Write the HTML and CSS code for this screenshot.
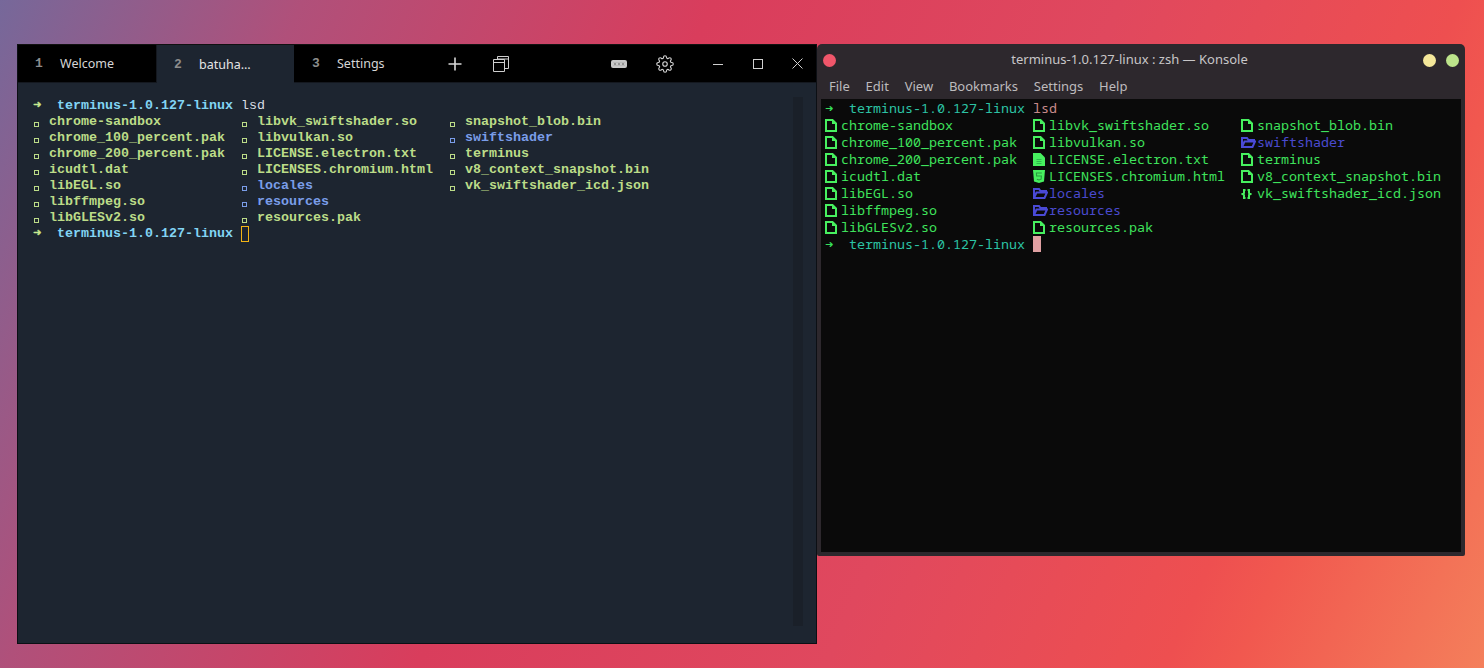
FILE: index.html
```html
<!DOCTYPE html>
<html lang="en">
<head>
    <meta charset="UTF-8">
    <meta name="viewport" content="width=device-width, initial-scale=1.0">
    <title>Desktop - Terminus and Konsole</title>
    <link rel="stylesheet" href="styles.css">
</head>
<body>
    <svg class="defs" width="0" height="0">
        <symbol id="file" viewBox="0 0 12 13">
            <path d="M1 1H7.5L11 4.5V12H1Z" fill="none" stroke="currentColor" stroke-width="2"/>
            <path d="M7 0.5L11.5 5H7Z" fill="currentColor"/>
        </symbol>
        <symbol id="text" viewBox="0 0 12 13">
            <path d="M0 0H7.5L12 4.5V13H0Z" fill="currentColor"/>
            <path d="M3.5 6.5H8.5M3.5 8.5H8.5M3.5 10.5H8.5" stroke="#2cb84c" stroke-width="1"/>
        </symbol>
        <symbol id="html" viewBox="0 0 12 13">
            <path d="M0 0H12L11 11.5L6 13L1 11.5Z" fill="currentColor"/>
            <path d="M8.8 3H3.4L3.6 6H8.4L8.1 9.2L6 9.9L3.9 9.2" fill="none" stroke="#2a9a40" stroke-width="1.1"/>
        </symbol>
        <symbol id="folder" viewBox="0 0 15 11">
            <path d="M1 10V1H6L7.5 3H13V4.5M1 10L3.5 4.5H14L11.5 10Z" fill="none" stroke="currentColor" stroke-width="2"/>
        </symbol>
        <symbol id="json" viewBox="0 0 11 10">
            <path d="M4.5 1H3V4L1.5 5L3 6V9H4.5M6.5 1H8V4L9.5 5L8 6V9H6.5" fill="none" stroke="currentColor" stroke-width="2"/>
        </symbol>
    </svg>

    <section class="window terminus">
        <header class="tabbar">
            <div class="tab"><span class="tab-num">1</span><span>Welcome</span></div>
            <div class="tab active"><span class="tab-num">2</span><span>batuha…</span></div>
            <div class="tab"><span class="tab-num">3</span><span>Settings</span></div>
            <div class="tab-actions">
                <svg class="plus" width="16" height="16" viewBox="0 0 16 16"><path d="M8 1.5V14.5M1.5 8H14.5" stroke="#d8d8d8" stroke-width="1.6"/></svg>
                <svg class="stack" width="16" height="16" viewBox="0 0 16 16" fill="none" stroke="#cfcfcf" stroke-width="1"><path d="M4.5 3.5V.5H15.5V12.5H11.5M4.5 3H15.5"/><path d="M.5 3.5H11.5V15.5H.5ZM.5 6.5H11.5"/></svg>
            </div>
            <div class="win-actions">
                <svg class="keyboard" width="16" height="8" viewBox="0 0 16 8"><rect width="16" height="8" rx="2" fill="#c8c8c8"/><path d="M3 2.5L5 5.5M5 2.5L3 5.5M7 2.5L9 5.5M9 2.5L7 5.5M11 2.5L13 5.5M13 2.5L11 5.5" stroke="#777" stroke-width=".7"/></svg>
                <svg class="gear" width="18" height="18" viewBox="0 0 24 24" fill="none" stroke="#d4d4d4" stroke-width="1.5"><circle cx="12" cy="12" r="3"/><path d="M19.4 15a1.65 1.65 0 0 0 .33 1.82l.06.06a2 2 0 0 1 0 2.83 2 2 0 0 1-2.83 0l-.06-.06a1.65 1.65 0 0 0-1.82-.33 1.65 1.65 0 0 0-1 1.51V21a2 2 0 0 1-2 2 2 2 0 0 1-2-2v-.09A1.65 1.65 0 0 0 9 19.4a1.65 1.65 0 0 0-1.82.33l-.06.06a2 2 0 0 1-2.83 0 2 2 0 0 1 0-2.83l.06-.06a1.65 1.65 0 0 0 .33-1.82 1.65 1.65 0 0 0-1.51-1H3a2 2 0 0 1-2-2 2 2 0 0 1 2-2h.09A1.65 1.65 0 0 0 4.6 9a1.65 1.65 0 0 0-.33-1.82l-.06-.06a2 2 0 0 1 0-2.83 2 2 0 0 1 2.83 0l.06.06a1.65 1.65 0 0 0 1.82.33H9a1.65 1.65 0 0 0 1-1.51V3a2 2 0 0 1 2-2 2 2 0 0 1 2 2v.09a1.65 1.65 0 0 0 1 1.51 1.65 1.65 0 0 0 1.82-.33l.06-.06a2 2 0 0 1 2.83 0 2 2 0 0 1 0 2.83l-.06.06a1.65 1.65 0 0 0-.33 1.82V9a1.65 1.65 0 0 0 1.51 1H21a2 2 0 0 1 2 2 2 2 0 0 1-2 2h-.09a1.65 1.65 0 0 0-1.51 1z"/></svg>
                <svg class="ctrl" width="10" height="10" viewBox="0 0 10 10"><path d="M0 5.5H10" stroke="#cfcfcf"/></svg>
                <svg class="ctrl" width="10" height="10" viewBox="0 0 10 10"><rect x=".5" y=".5" width="9" height="9" fill="none" stroke="#cfcfcf"/></svg>
                <svg class="ctrl close" width="11" height="11" viewBox="0 0 11 11"><path d="M.5 .5L10.5 10.5M10.5 .5L.5 10.5" stroke="#cfcfcf"/></svg>
            </div>
        </header>
        <div class="term-body">
            <div class="term-text">
                <div class="prompt"><span class="arrow">➜</span><span class="dir">terminus-1.0.127-linux</span><span class="cmd">lsd</span></div>
                <div class="listing">
                    <div class="col">
                        <div class="entry"><i></i>chrome-sandbox</div>
                        <div class="entry"><i></i>chrome_100_percent.pak</div>
                        <div class="entry"><i></i>chrome_200_percent.pak</div>
                        <div class="entry"><i></i>icudtl.dat</div>
                        <div class="entry"><i></i>libEGL.so</div>
                        <div class="entry"><i></i>libffmpeg.so</div>
                        <div class="entry"><i></i>libGLESv2.so</div>
                    </div>
                    <div class="col">
                        <div class="entry"><i></i>libvk_swiftshader.so</div>
                        <div class="entry"><i></i>libvulkan.so</div>
                        <div class="entry"><i></i>LICENSE.electron.txt</div>
                        <div class="entry"><i></i>LICENSES.chromium.html</div>
                        <div class="entry dir-entry"><i></i>locales</div>
                        <div class="entry dir-entry"><i></i>resources</div>
                        <div class="entry"><i></i>resources.pak</div>
                    </div>
                    <div class="col">
                        <div class="entry"><i></i>snapshot_blob.bin</div>
                        <div class="entry dir-entry"><i></i>swiftshader</div>
                        <div class="entry"><i></i>terminus</div>
                        <div class="entry"><i></i>v8_context_snapshot.bin</div>
                        <div class="entry"><i></i>vk_swiftshader_icd.json</div>
                    </div>
                </div>
                <div class="prompt"><span class="arrow">➜</span><span class="dir">terminus-1.0.127-linux</span><span class="cursor"></span></div>
            </div>
            <div class="scrollbar"></div>
        </div>
    </section>

    <section class="window konsole">
        <header class="titlebar">
            <span class="dot red"></span>
            <span class="title">terminus-1.0.127-linux : zsh — Konsole</span>
            <span class="dot yellow"></span>
            <span class="dot green"></span>
        </header>
        <nav class="menubar">
            <span>File</span><span>Edit</span><span>View</span><span>Bookmarks</span><span>Settings</span><span>Help</span>
        </nav>
        <div class="kon-body">
            <div class="prompt"><span class="arrow">➜</span><span class="dir">terminus-1.0.127-linux</span><span class="cmd">lsd</span></div>
            <div class="listing">
                <div class="col">
                    <div class="entry"><svg><use href="#file"/></svg>chrome-sandbox</div>
                    <div class="entry"><svg><use href="#file"/></svg>chrome_100_percent.pak</div>
                    <div class="entry"><svg><use href="#file"/></svg>chrome_200_percent.pak</div>
                    <div class="entry"><svg><use href="#file"/></svg>icudtl.dat</div>
                    <div class="entry"><svg><use href="#file"/></svg>libEGL.so</div>
                    <div class="entry"><svg><use href="#file"/></svg>libffmpeg.so</div>
                    <div class="entry"><svg><use href="#file"/></svg>libGLESv2.so</div>
                </div>
                <div class="col">
                    <div class="entry"><svg><use href="#file"/></svg>libvk_swiftshader.so</div>
                    <div class="entry"><svg><use href="#file"/></svg>libvulkan.so</div>
                    <div class="entry"><svg><use href="#text"/></svg>LICENSE.electron.txt</div>
                    <div class="entry"><svg><use href="#html"/></svg>LICENSES.chromium.html</div>
                    <div class="entry dir-entry"><svg class="wide"><use href="#folder"/></svg>locales</div>
                    <div class="entry dir-entry"><svg class="wide"><use href="#folder"/></svg>resources</div>
                    <div class="entry"><svg><use href="#file"/></svg>resources.pak</div>
                </div>
                <div class="col">
                    <div class="entry"><svg><use href="#file"/></svg>snapshot_blob.bin</div>
                    <div class="entry dir-entry"><svg class="wide"><use href="#folder"/></svg>swiftshader</div>
                    <div class="entry"><svg><use href="#file"/></svg>terminus</div>
                    <div class="entry"><svg><use href="#file"/></svg>v8_context_snapshot.bin</div>
                    <div class="entry"><svg class="short"><use href="#json"/></svg>vk_swiftshader_icd.json</div>
                </div>
            </div>
            <div class="prompt"><span class="arrow">➜</span><span class="dir">terminus-1.0.127-linux</span><span class="cursor"></span></div>
        </div>
    </section>
</body>
</html>
```

FILE: styles.css
```css
* {
    margin: 0;
    padding: 0;
    box-sizing: border-box;
}

html, body {
    width: 100%;
    height: 100%;
    overflow: hidden;
}

body {
    position: relative;
    font-family: "Noto Sans", sans-serif;
    background: linear-gradient(114deg, #76689a 0%, #b0507a 17%, #d93d5c 40%, #e0485e 63%, #ee4f50 82%, #f1584f 86%, #f47f5b 100%);
}

.defs {
    position: absolute;
}

.window {
    position: absolute;
    display: flex;
    flex-direction: column;
}

/* left window */
.terminus {
    left: 17px;
    top: 44px;
    width: 800px;
    height: 600px;
    background-color: #1d2530;
    border: 1px solid #0c0f14;
    border-top-color: #111;
}

.tabbar {
    display: flex;
    align-items: center;
    height: 38px;
    background-color: #000;
    border-bottom: 1px solid #14181f;
    color: #d6d6d6;
    font-size: 12.5px;
}

.tab {
    display: flex;
    align-items: center;
    width: 138px;
    height: 38px;
    padding-left: 18px;
}

.tab:first-child {
    width: 139px;
    padding-left: 17px;
    border-right: 1px solid #14181f;
}

.tab.active {
    width: 137px;
    height: 39px;
    margin-bottom: -1px;
    padding-left: 17px;
    background-color: #1d2530;
    color: #e4e4e4;
}

.tab-num {
    width: 25px;
    font-family: "Liberation Mono", monospace;
    font-size: 13px;
    font-weight: bold;
    color: #8c8c8c;
}

.tab-actions {
    display: flex;
    align-items: center;
    gap: 30px;
    margin-left: 15px;
}

.win-actions {
    display: flex;
    align-items: center;
    margin-left: auto;
    padding-right: 13px;
}

.keyboard {
    margin-right: 29px;
}

.gear {
    margin-right: 39px;
}

.ctrl {
    margin-left: 30px;
}

.ctrl:nth-child(3) {
    margin-left: 0;
}

.ctrl.close {
    margin-left: 29px;
}

.term-body {
    flex: 1;
    display: flex;
    justify-content: space-between;
    padding: 15px 13px 17px 15px;
}

.term-text,
.kon-body {
    font-size: 13.33px;
}

.term-text {
    font-family: "Liberation Mono", monospace;
    line-height: 16px;
    font-weight: bold;
    color: #bcdc88;
}

.scrollbar {
    width: 10px;
    margin-top: -1px;
    background-color: #1a2029;
}

.listing {
    display: grid;
    grid-template-columns: 208px 208px 208px;
}

.prompt {
    display: flex;
    white-space: pre;
}

.arrow {
    width: 24px;
}

.dir {
    width: 184px;
}

.entry {
    display: flex;
    align-items: center;
    white-space: pre;
}

.term-text .arrow {
    color: #c7e88f;
    -webkit-text-stroke: 0.4px #c7e88f;
}

.term-text .dir {
    color: #82d4f4;
}

.term-text .cmd {
    font-weight: normal;
    color: #d9dde4;
}

.term-text .cursor {
    width: 8px;
    height: 16px;
    border: 1px solid #f2b415;
}

.term-text .entry i {
    width: 5px;
    height: 5px;
    margin: 5px 10px 0 1px;
    border: 1px solid currentColor;
}

.term-text .dir-entry {
    color: #7a9de9;
}

/* right window */
.konsole {
    left: 817px;
    top: 44px;
    width: 648px;
    height: 512px;
    padding: 0 4px 4px;
    background-color: #2d282d;
    border-radius: 5px 5px 2px 2px;
    color: #c8c6c8;
}

.titlebar {
    display: flex;
    align-items: center;
    height: 29px;
    flex-shrink: 0;
    font-size: 13px;
}

.title {
    flex: 1;
    text-align: center;
}

.dot {
    width: 13px;
    height: 13px;
    border-radius: 50%;
    margin-top: 3px;
}

.red {
    margin-left: 2px;
    background-color: #f0566a;
}

.yellow {
    background-color: #f4e79a;
    margin-right: 10px;
}

.green {
    background-color: #bde48b;
    margin-right: 2px;
}

.menubar {
    display: flex;
    gap: 15.8px;
    align-items: center;
    height: 26px;
    padding-left: 8px;
    flex-shrink: 0;
    font-size: 13px;
    color: #bdbbbd;
}

.kon-body {
    flex: 1;
    padding: 1px 0 0 4px;
    background-color: #0a0a0a;
    font-family: "Noto Sans Mono", "DejaVu Sans Mono", monospace;
    line-height: 17px;
    color: #3fe35c;
}

.kon-body .arrow {
    color: #37e05a;
}

.kon-body .dir {
    color: #2cc3a4;
}

.kon-body .cmd {
    color: #c88a8a;
}

.kon-body .cursor {
    width: 8px;
    height: 16px;
    background-color: #e0a0a2;
}

.kon-body .entry svg {
    width: 12px;
    height: 13px;
    margin-right: 4px;
    color: #47f05f;
}

.kon-body .entry svg.wide {
    width: 15px;
    height: 11px;
    margin-right: 1px;
    color: #4a4ad6;
}

.kon-body .entry svg.short {
    width: 11px;
    height: 10px;
    margin-right: 5px;
}

.kon-body .dir-entry {
    color: #4a4ad0;
}
```
